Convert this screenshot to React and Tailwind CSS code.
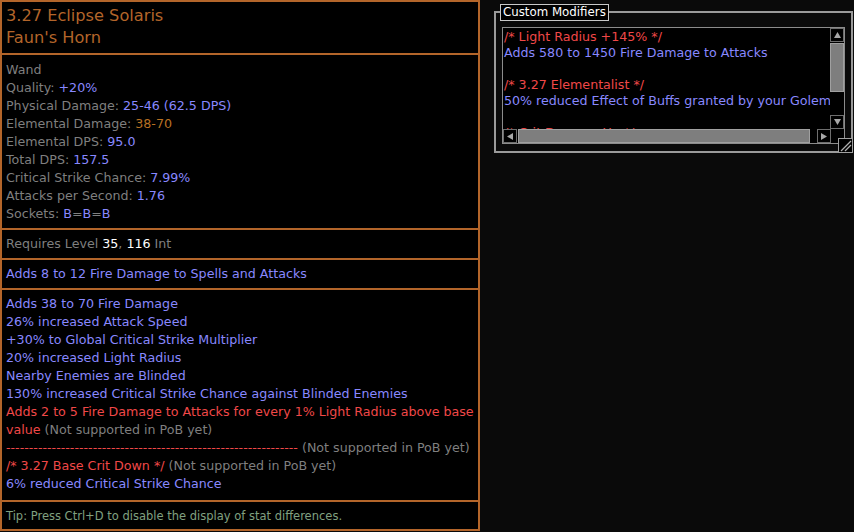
import React from "react";

const G = "text-[#7f7f7f]";
const B = "text-[#8888ff]";
const R = "text-[#f04848]";

function Line({ children, className = "" }) {
  return <div className={`h-[18px] leading-[18px] whitespace-nowrap ${className}`}>{children}</div>;
}

function Tooltip() {
  const dashes = "-".repeat(64);
  return (
    <div className="w-[480px] h-[531px] shrink-0 border-2 border-[#b3652a] bg-black flex flex-col text-[12.65px] font-['DejaVu_Sans',sans-serif]">
      <div className="px-[4px] pt-[3px] pb-[4px] text-[16.2px] leading-[22px] text-[#b3652a]">
        <div className="h-[22px]">3.27 Eclipse Solaris</div>
        <div className="h-[22px]">Faun's Horn</div>
      </div>
      <div className="border-t-2 border-[#b3652a] px-[4px] pt-[6px] pb-[5px]">
        <Line className={G}>Wand</Line>
        <Line className={G}>Quality: <span className={B}>+20%</span></Line>
        <Line className={G}>Physical Damage: <span className={B}>25-46 (62.5 DPS)</span></Line>
        <Line className={G}>Elemental Damage: <span className="text-[#b97123]">38-70</span></Line>
        <Line className={G}>Elemental DPS: <span className={B}>95.0</span></Line>
        <Line className={G}>Total DPS: <span className={B}>157.5</span></Line>
        <Line className={G}>Critical Strike Chance: <span className={B}>7.99%</span></Line>
        <Line className={G}>Attacks per Second: <span className={B}>1.76</span></Line>
        <Line className={G}>
          Sockets: <span className={B}>B</span>=<span className={B}>B</span>=<span className={B}>B</span>
        </Line>
      </div>
      <div className="border-t-2 border-[#b3652a] px-[4px] py-[5px]">
        <Line className={G}>
          Requires Level <span className="text-white">35</span>, <span className="text-white">116</span> Int
        </Line>
      </div>
      <div className="border-t-2 border-[#b3652a] px-[4px] py-[5px]">
        <Line className={B}>Adds 8 to 12 Fire Damage to Spells and Attacks</Line>
      </div>
      <div className="border-t-2 border-[#b3652a] px-[4px] pt-[5px] pb-[7px]">
        <Line className={B}>Adds 38 to 70 Fire Damage</Line>
        <Line className={B}>26% increased Attack Speed</Line>
        <Line className={B}>+30% to Global Critical Strike Multiplier</Line>
        <Line className={B}>20% increased Light Radius</Line>
        <Line className={B}>Nearby Enemies are Blinded</Line>
        <Line className={B}>130% increased Critical Strike Chance against Blinded Enemies</Line>
        <Line className={R}>Adds 2 to 5 Fire Damage to Attacks for every 1% Light Radius above base</Line>
        <Line className={R}>
          value <span className={G}>(Not supported in PoB yet)</span>
        </Line>
        <Line className={R}>
          {dashes} <span className={G}>(Not supported in PoB yet)</span>
        </Line>
        <Line className={R}>
          /* 3.27 Base Crit Down */ <span className={G}>(Not supported in PoB yet)</span>
        </Line>
        <Line className={B}>6% reduced Critical Strike Chance</Line>
      </div>
      <div className="border-t-2 border-[#b3652a] px-[4px] pt-[5px] pb-[4px]">
        <div className="h-[18px] leading-[18px] text-[11.5px] text-[#80a080] whitespace-nowrap">
          Tip: Press Ctrl+D to disable the display of stat differences.
        </div>
      </div>
    </div>
  );
}

function Btn({ children, className = "" }) {
  return (
    <div className={`w-[14px] h-[14px] shrink-0 border border-[#6e6e6e] bg-black flex items-center justify-center ${className}`}>
      {children}
    </div>
  );
}

function Tri({ dir }) {
  const pts = {
    up: "1,7 4.5,1 8,7",
    down: "1,1 4.5,7 8,1",
    left: "7,1 1,4.5 7,8",
    right: "1,1 7,4.5 1,8",
  }[dir];
  const w = dir === "left" || dir === "right" ? 8 : 9;
  const h = dir === "left" || dir === "right" ? 9 : 8;
  return (
    <svg width={w} height={h} viewBox={`0 0 ${w} ${h}`}>
      <polygon points={pts} fill="#a8a8a8" />
    </svg>
  );
}

function CustomModifiers() {
  return (
    <div className="relative mt-[11px] ml-[14px] w-[359px] h-[142px] border-2 border-[#9a9a9a] bg-[#0a0a0a] font-['DejaVu_Sans',sans-serif]">
      <div className="absolute left-[4px] top-[-9px] h-[17px] px-[2px] border border-[#c8c8c8] bg-black text-white text-[11.8px] leading-[15px] whitespace-nowrap">
        Custom Modifiers
      </div>
      <div className="ml-[6px] mt-[14px] w-[343px] h-[117px] border border-[#8c8c8c] bg-black flex flex-col">
        <div className="flex flex-1 min-h-0">
          <div className="flex-1 overflow-hidden pl-[1px] pt-[1px] text-[12.65px] leading-[16px] whitespace-nowrap">
            <div className={R}>/* Light Radius +145% */</div>
            <div className={B}>Adds 580 to 1450 Fire Damage to Attacks</div>
            <div className="h-[16px]"></div>
            <div className={R}>/* 3.27 Elementalist */</div>
            <div className={B}>50% reduced Effect of Buffs granted by your Golem</div>
            <div className="h-[16px]"></div>
            <div className={R}>/* Crit Damage Up */</div>
          </div>
          <div className="w-[14px] flex flex-col">
            <Btn><Tri dir="up" /></Btn>
            <div className="flex-1 flex flex-col pt-[1px]">
              <div className="h-[49px] border border-[#a0a0a0] bg-[#7e7e7e]"></div>
            </div>
            <Btn><Tri dir="down" /></Btn>
          </div>
        </div>
        <div className="h-[14px] flex">
          <Btn><Tri dir="left" /></Btn>
          <div className="flex-1 flex items-stretch pl-[1px] pr-[7px]">
            <div className="w-[292px] border border-[#a0a0a0] bg-[#7e7e7e]"></div>
          </div>
          <Btn><Tri dir="right" /></Btn>
          <div className="w-[14px] bg-black"></div>
        </div>
      </div>
      <div className="absolute right-[-2px] bottom-[-2px] w-[15px] h-[15px] border border-[#a0a0a0] bg-black">
        <svg width="13" height="13" viewBox="0 0 13 13">
          <line x1="2" y1="12" x2="12" y2="2" stroke="#b0b0b0" strokeWidth="1.2" />
          <line x1="6" y1="12" x2="12" y2="6" stroke="#b0b0b0" strokeWidth="1.2" />
        </svg>
      </div>
    </div>
  );
}

export default function App() {
  return (
    <div className="w-[854px] h-[532px] bg-[#0a0a0a] flex items-start overflow-hidden">
      <Tooltip />
      <CustomModifiers />
    </div>
  );
}
